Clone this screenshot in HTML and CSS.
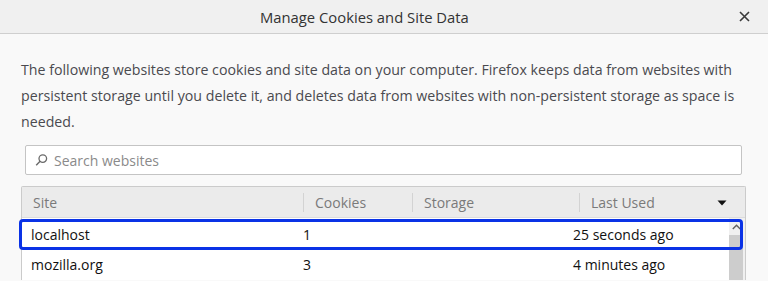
FILE: index.html
```html
<!DOCTYPE html>
<html>
<head>
<meta charset="utf-8">
<link rel="stylesheet" href="styles.css">
</head>
<body>
<div class="dialog">
  <div class="titlebar">
    <div class="title">Manage Cookies and Site Data</div>
    <button class="close" aria-label="Close">
      <svg width="11" height="11" viewBox="0 0 11 11"><path d="M1 1 L10 10 M10 1 L1 10" stroke="#3a3a3a" stroke-width="1.6" fill="none"/></svg>
    </button>
  </div>
  <div class="content">
    <p class="desc">The following websites store cookies and site data on your computer. Firefox keeps data from websites with<br>persistent storage until you delete it, and deletes data from websites with non-persistent storage as space is<br>needed.</p>
    <div class="search">
      <svg class="search-icon" width="13" height="12" viewBox="0 0 13 12"><circle cx="7.8" cy="4.6" r="3.8" stroke="#6a6a6a" stroke-width="1.3" fill="none"/><path d="M5.1 7.3 L1.2 11.2" stroke="#6a6a6a" stroke-width="1.4"/></svg>
      <span class="placeholder">Search websites</span>
    </div>
    <div class="table">
      <div class="thead">
        <div class="th th-site">Site</div>
        <div class="th th-cookies">Cookies</div>
        <div class="th th-storage">Storage</div>
        <div class="th th-used">Last Used</div>
        <div class="th-sort">
          <svg width="10" height="6" viewBox="0 0 10 6"><path d="M0.5 0.5 H9.5 L5 5.5 Z" fill="#111"/></svg>
        </div>
      </div>
      <div class="tbody">
        <div class="rows">
          <div class="row">
            <div class="cell c-site">localhost</div>
            <div class="cell c-cookies">1</div>
            <div class="cell c-used">25 seconds ago</div>
          </div>
          <div class="row">
            <div class="cell c-site">mozilla.org</div>
            <div class="cell c-cookies">3</div>
            <div class="cell c-used">4 minutes ago</div>
          </div>
        </div>
        <div class="scrollbar">
          <div class="sb-up">
            <svg width="9" height="6" viewBox="0 0 9 6"><path d="M0.8 5 L4.5 1.2 L8.2 5" stroke="#606060" stroke-width="1.4" fill="none"/></svg>
          </div>
          <div class="sb-thumb"></div>
        </div>
        <div class="focus-ring"></div>
      </div>
    </div>
  </div>
</div>
</body>
</html>
```
FILE: styles.css
```css
html, body {
  margin: 0;
  padding: 0;
}
body {
  width: 768px;
  height: 281px;
  overflow: hidden;
  background: #f9f9f9;
  font-family: "Open Sans", "Noto Sans", sans-serif;
  color: #4a4a4f;
}
.dialog {
  display: flex;
  flex-direction: column;
}
.titlebar {
  height: 34px;
  box-sizing: border-box;
  background: #f0f0f0;
  border-bottom: 1px solid #cfcfcf;
  display: flex;
  align-items: center;
  justify-content: space-between;
  padding: 0 18px 0 260px;
}
.title {
  font-size: 14.8px;
  color: #333;
}
.close {
  border: 0;
  background: transparent;
  padding: 0;
  width: 11px;
  height: 11px;
  display: flex;
}
.content {
  padding: 0 21px;
}
.desc {
  margin: 23px 0 0 0;
  font-size: 14.2px;
  line-height: 26px;
  color: #4a4a4f;
}
.search {
  margin: 10px 4px 0 4px;
  height: 30px;
  box-sizing: border-box;
  width: 717px;
  background: #fff;
  border: 1px solid #c4c4c4;
  border-radius: 2px;
  display: flex;
  align-items: center;
  padding-left: 9px;
  gap: 6px;
}
.search-icon {
  flex: none;
}
.placeholder {
  font-size: 14px;
  color: #8a8a8a;
}
.table {
  margin-top: 11px;
  width: 725px;
  box-sizing: border-box;
  border: 1px solid #cbcbcb;
  border-bottom: 0;
  border-radius: 2px 2px 0 0;
  background: #fff;
}
.thead {
  height: 31px;
  box-sizing: border-box;
  background: #ebebeb;
  border-bottom: 1px solid #dcdcdc;
  display: grid;
  grid-template-columns: 281px 109px 167px 1fr 28px;
  align-items: center;
}
.th {
  font-size: 14px;
  color: #7a7a7a;
  padding-left: 11px;
  height: 19px;
  line-height: 19px;
  border-left: 1px solid #d3d3d3;
}
.th-site {
  border-left: 0;
}
.th-sort {
  display: flex;
  align-items: center;
  padding-top: 1px;
}
.tbody {
  position: relative;
  display: flex;
  height: 62px;
}
.rows {
  flex: 1;
  padding-top: 1px;
}
.row {
  height: 30px;
  display: grid;
  grid-template-columns: 272px 270px 1fr;
  align-items: center;
  padding-left: 9px;
  font-size: 14px;
  color: #111;
}
.scrollbar {
  width: 16px;
  background: #f0f0f0;
  display: flex;
  flex-direction: column;
}
.sb-up {
  height: 17px;
  display: flex;
  justify-content: center;
  align-items: center;
  padding-right: 2px;
}
.sb-thumb {
  flex: 1;
  margin-right: 2px;
  background: #cdcdcd;
}
.focus-ring {
  position: absolute;
  left: -3px;
  top: 1px;
  width: 724px;
  height: 31px;
  box-sizing: border-box;
  border: 3px solid #0a32e6;
  border-radius: 4px;
  pointer-events: none;
}
```
